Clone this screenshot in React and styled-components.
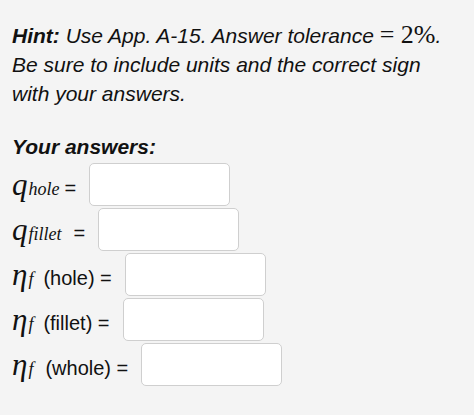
import React from 'react';
import styled, {createGlobalStyle} from 'styled-components';

const GlobalStyle = createGlobalStyle`
    html, body {
        margin: 0;
        padding: 0;
        background-color: #f4f4f4;
    }
`;

const Page = styled.main`
    width: 474px;
    height: 415px;
    box-sizing: border-box;
    background-color: #f4f4f4;
    color: #111;
    font-family: 'Liberation Sans', Arial, sans-serif;
    padding: 21px 12px 0;
`;

const Hint = styled.p`
    margin: 0;
    font-size: 21px;
    line-height: 29px;
    font-style: italic;
`;

const Math = styled.span`
    font-family: 'Liberation Serif', 'Times New Roman', serif;
    font-style: normal;
    font-size: 26px;
    line-height: 0;
`;

const Heading = styled.h3`
    margin: 26px 0 3px;
    font-size: 21px;
    font-style: italic;
    font-weight: bold;
    line-height: 26px;
`;

const Rows = styled.div`
    display: flex;
    flex-direction: column;
    gap: 2px;
`;

const Row = styled.div`
    display: flex;
    align-items: center;
    gap: 13px;
`;

const Label = styled.span`
    display: flex;
    align-items: baseline;
    font-size: 20px;
    white-space: nowrap;
`;

const Symbol = styled.span`
    font-family: 'Liberation Serif', 'Times New Roman', serif;
    font-style: italic;
    font-size: 31px;
`;

const Sub = styled.sub`
    font-family: 'Liberation Serif', 'Times New Roman', serif;
    font-style: italic;
    font-size: 18px;
    vertical-align: -5px;
    margin-left: 1px;
    margin-right: ${(props) => props.gap || 0}px;
`;

const Input = styled.input`
    width: 141px;
    height: 43px;
    box-sizing: border-box;
    border: 1.5px solid #cfcfcf;
    border-radius: 5px;
    background-color: #fff;
    outline: none;
`;

const answers = [
    {symbol: 'q', sub: 'hole', text: '', gap: 5},
    {symbol: 'q', sub: 'fillet', text: '', gap: 12},
    {symbol: 'η', sub: 'f', text: '(hole)', gap: 10},
    {symbol: 'η', sub: 'f', text: '(fillet)', gap: 10},
    {symbol: 'η', sub: 'f', text: '(whole)', gap: 12},
];

const App = () => (
    <Page>
        <GlobalStyle />
        <Hint>
            <b>{'Hint:'}</b>
            {' Use App. A-15. Answer tolerance '}
            <Math>{'= 2%'}</Math>
            {'.'}
            <br />
            {'Be sure to include units and the correct sign'}
            <br />
            {'with your answers.'}
        </Hint>
        <Heading>{'Your answers:'}</Heading>
        <Rows>
            {answers.map((answer) => (
                <Row key={answer.sub + answer.text}>
                    <Label>
                        <Symbol>{answer.symbol}</Symbol>
                        <Sub gap={answer.gap}>{answer.sub}</Sub>
                        {answer.text ? `${answer.text} =` : '='}
                    </Label>
                    <Input type={'text'} />
                </Row>
            ))}
        </Rows>
    </Page>
);

export default App;
